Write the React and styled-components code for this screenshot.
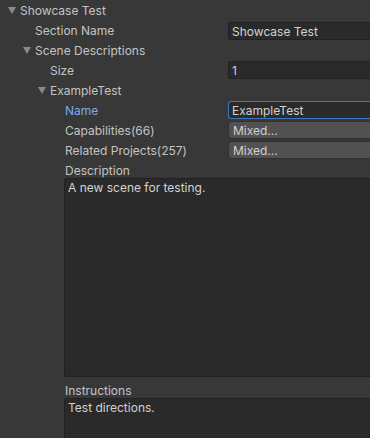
import React from "react";
import styled, { createGlobalStyle } from "styled-components";

const Global = createGlobalStyle`
  html, body { margin: 0; padding: 0; background: #383838; overflow: hidden; }
  body { font-family: Inter, "Noto Sans", sans-serif; font-size: 12px; color: #c4c4c4; }
  * { box-sizing: border-box; }
`;

const Panel = styled.div`
  width: 370px;
  height: 438px;
  background: #383838;
  overflow: hidden;
  display: flex;
  flex-direction: column;
`;

const Row = styled.div`
  display: flex;
  align-items: center;
  height: 20px;
  flex: 0 0 auto;
`;

const Label = styled.div`
  flex: 0 0 ${(p) => (p.$full ? "auto" : "228px")};
  display: flex;
  align-items: center;
  padding-left: ${(p) => 20 + p.$level * 15 - (p.$fold ? 12 : 0)}px;
  padding-top: 1px;
  color: ${(p) => (p.$active ? "#7babf3" : "#c4c4c4")};
  white-space: nowrap;
  line-height: 20px;
`;

const Arrow = styled.svg`
  width: 8px;
  height: 7px;
  margin-right: 4px;
  flex: 0 0 auto;
`;

const Field = styled.div`
  flex: 0 0 150px;
  height: 18px;
  margin-top: ${(p) => p.$mt || 0}px;
  border-radius: 3px 0 0 3px;
  padding: 0 0 0 ${(p) => (p.$popup ? 4 : 3)}px;
  display: flex;
  align-items: center;
  white-space: nowrap;
  color: #d2d2d2;
  background: ${(p) => (p.$popup ? "#515151" : "#2a2a2a")};
  border: 1px solid ${(p) => (p.$focus ? "#3a79bb" : p.$popup ? "#303030" : "#212121")};
  border-right: none;
`;

const AreaBlock = styled.div`
  display: flex;
  flex-direction: column;
  padding-left: 64px;
  flex: 0 0 auto;
`;

const AreaLabel = styled.div`
  height: 18px;
  padding-top: 3px;
  line-height: 16px;
  padding-left: 1px;
  color: #c4c4c4;
`;

const TextArea = styled.div`
  height: ${(p) => p.$h}px;
  background: #2a2a2a;
  border: 1px solid #212121;
  border-right: none;
  border-radius: 3px 0 0 3px;
  padding: 1px 3px;
  color: #d2d2d2;
  line-height: 16px;
`;

const Spacer = styled.div`
  height: ${(p) => p.$h}px;
  flex: 0 0 auto;
`;

const Tri = () => (
  <Arrow viewBox="0 0 8 7">
    <path d="M0 0 L8 0 L4 7 Z" fill="#8a8a8a" />
  </Arrow>
);

export default function App() {
  return (
    <>
      <Global />
      <Panel>
        <Row>
          <Label $level={0} $fold $full>
            <Tri />
            Showcase Test
          </Label>
        </Row>
        <Row>
          <Label $level={1}>Section Name</Label>
          <Field $mt={2}>Showcase Test</Field>
        </Row>
        <Row>
          <Label $level={1} $fold $full>
            <Tri />
            Scene Descriptions
          </Label>
        </Row>
        <Row>
          <Label $level={2}>Size</Label>
          <Field $mt={0}>1</Field>
        </Row>
        <Row>
          <Label $level={2} $fold $full>
            <Tri />
            ExampleTest
          </Label>
        </Row>
        <Row>
          <Label $level={3} $active>
            Name
          </Label>
          <Field $focus>ExampleTest</Field>
        </Row>
        <Row>
          <Label $level={3}>Capabilities(66)</Label>
          <Field $popup>Mixed...</Field>
        </Row>
        <Row>
          <Label $level={3}>Related Projects(257)</Label>
          <Field $popup>Mixed...</Field>
        </Row>
        <AreaBlock>
          <AreaLabel>Description</AreaLabel>
          <TextArea $h={199}>A new scene for testing.</TextArea>
        </AreaBlock>
        <Spacer $h={3} />
        <AreaBlock>
          <AreaLabel>Instructions</AreaLabel>
          <TextArea $h={199}>Test directions.</TextArea>
        </AreaBlock>
      </Panel>
    </>
  );
}
